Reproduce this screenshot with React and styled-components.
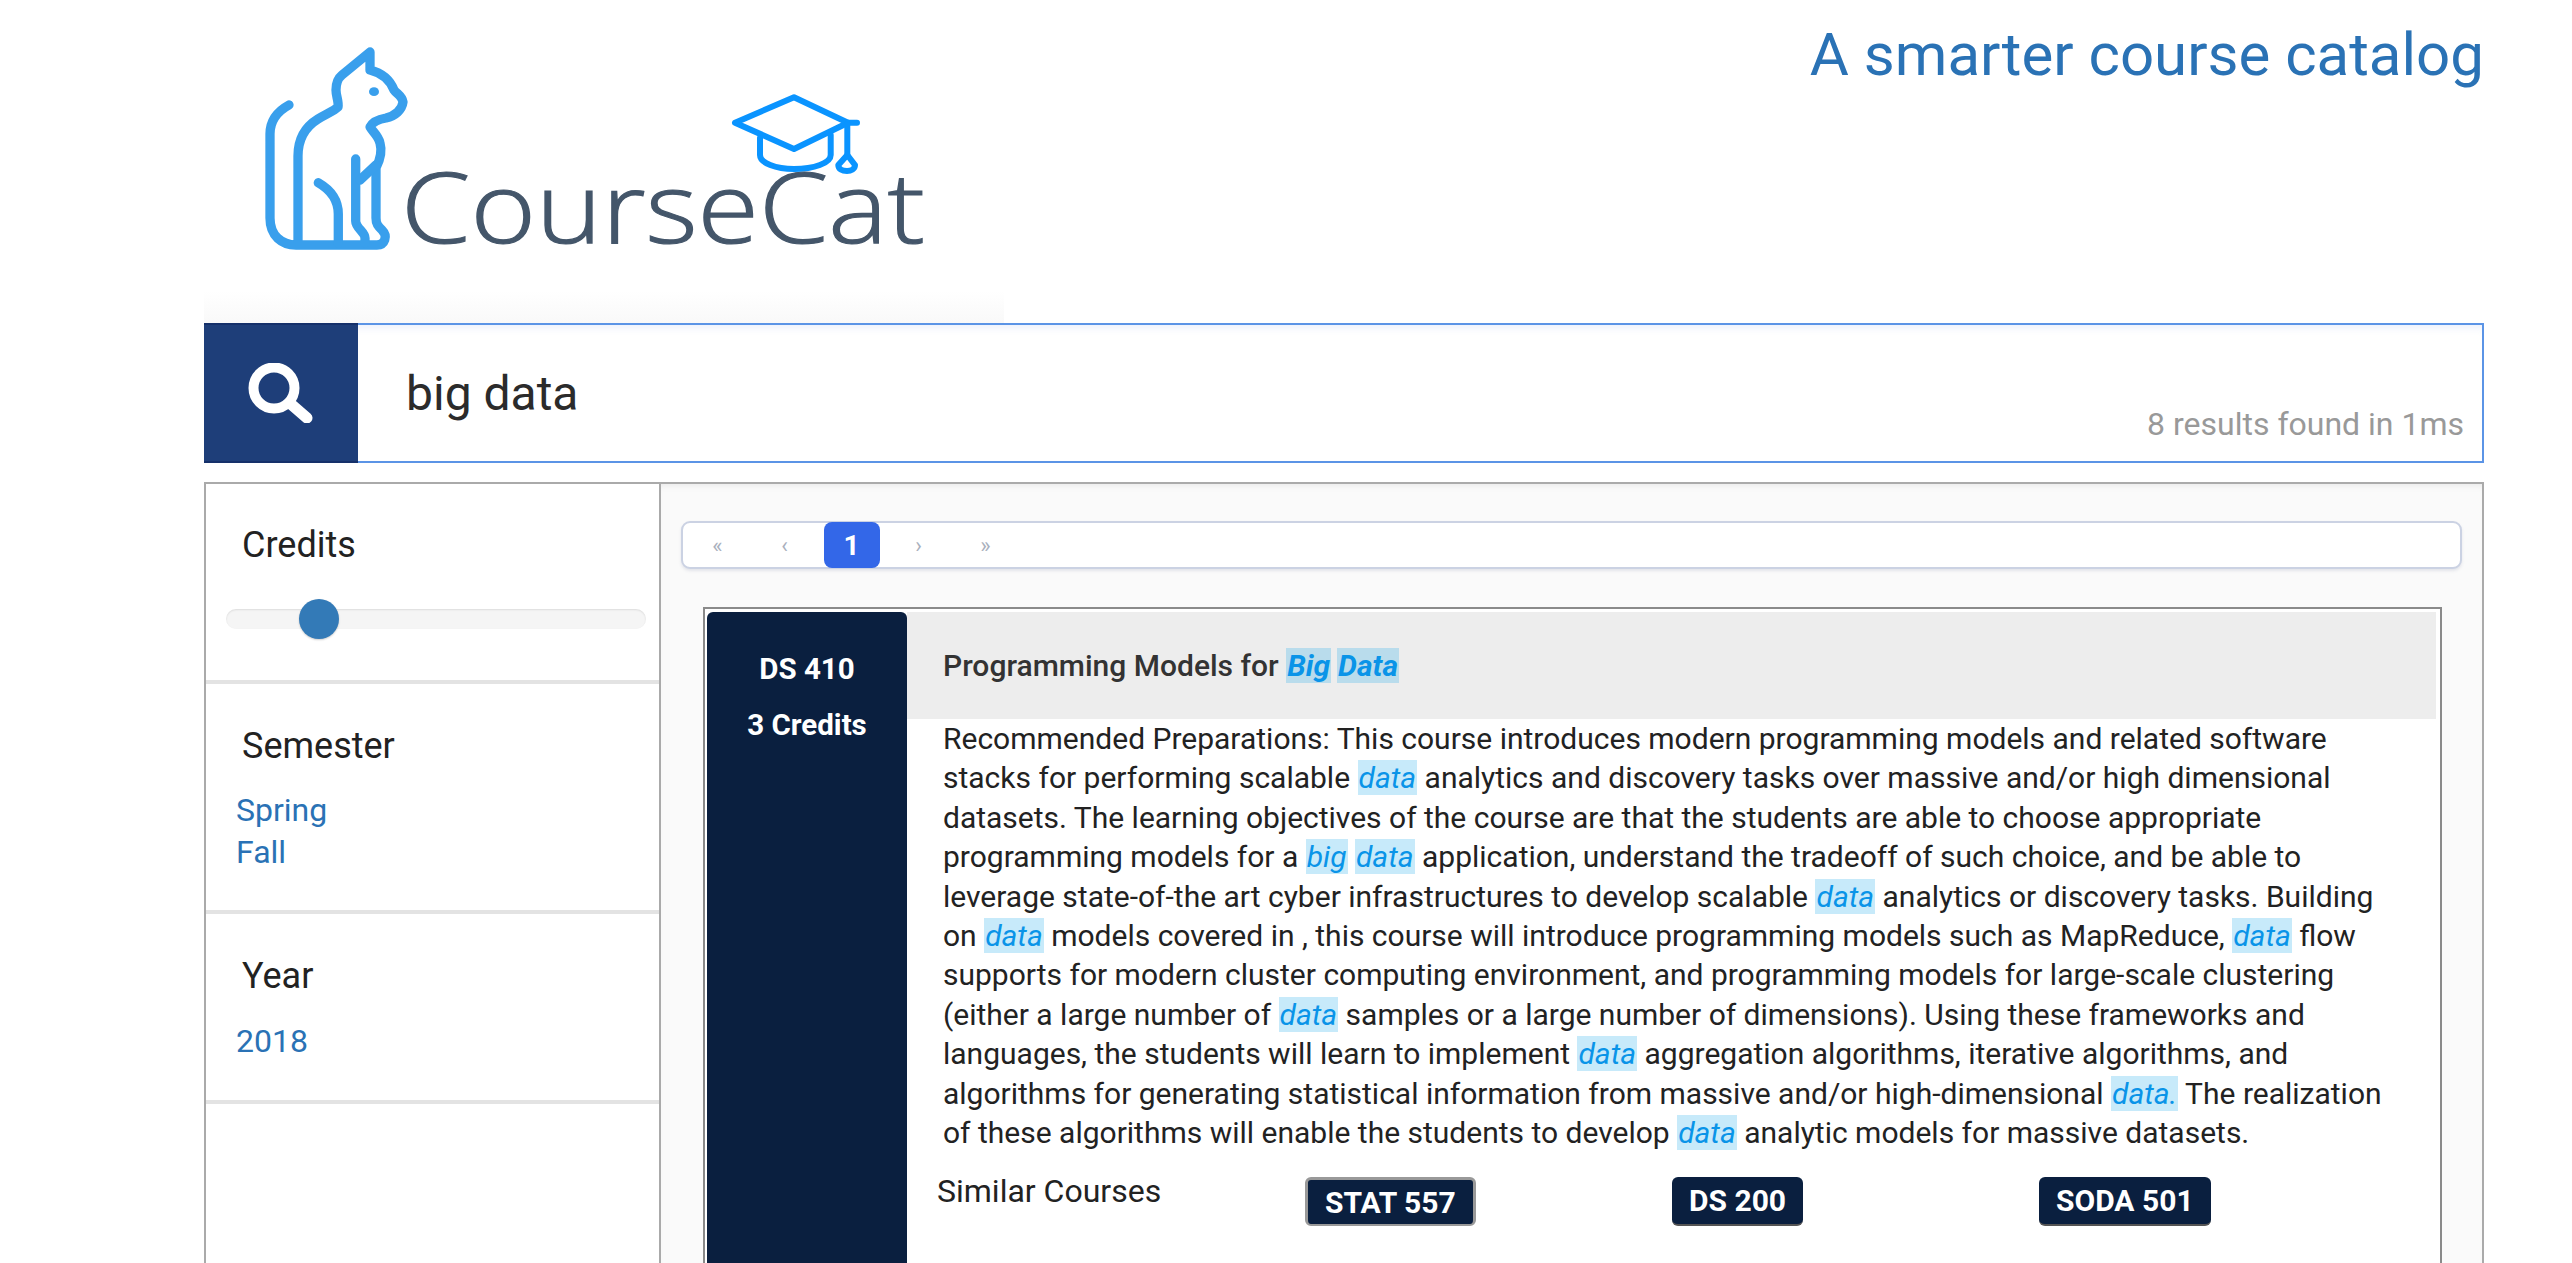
import React from 'react'
import styled, { createGlobalStyle } from 'styled-components'

const GlobalStyle = createGlobalStyle`
  html, body {
    margin: 0;
    padding: 0;
    background: #fff;
    overflow: hidden;
  }
  body {
    font-family: Roboto, "Liberation Sans", sans-serif;
    color: #222;
  }
`

const Page = styled.div`
  width: 2280px;
  height: 1263px;
  margin-left: 204px;
  overflow: hidden;
`
const Header = styled.header`
  height: 323px;
  display: flex;
  justify-content: space-between;
  align-items: flex-start;
`
const LogoWrap = styled.div`
  width: 800px;
  height: 323px;
  background: linear-gradient(to bottom, #fff 90%, #f9f9f9 100%);
  svg { display: block; }
`
const Tagline = styled.h1`
  margin: 20px 0 0;
  font-size: 60px;
  line-height: 70px;
  font-weight: 400;
  color: #2a72b5;
`
const SearchBar = styled.div`
  height: 140px;
  box-sizing: border-box;
  display: flex;
  border: 2px solid #5b94e6;
  border-left: none;
  box-shadow: inset 0 8px 8px -6px rgba(60, 110, 220, .12);
`
const SearchIconBox = styled.div`
  width: 154px;
  margin: -2px 0;
  background: #1e3e79;
  border-top: 2px solid #15306a;
  border-bottom: 2px solid #15306a;
  display: flex;
  align-items: center;
  justify-content: center;
`
const SearchField = styled.div`
  flex: 1;
  position: relative;
  padding: 42px 0 0 48px;
  font-size: 48px;
  line-height: 54px;
  color: #2b2b2b;
`
const ResultCount = styled.span`
  position: absolute;
  right: 18px;
  bottom: 19px;
  font-size: 32px;
  line-height: 36px;
  color: #999;
`
const Body = styled.div`
  margin-top: 19px;
  height: 800px;
  box-sizing: border-box;
  display: flex;
  border: 2px solid #aaa;
  border-bottom: none;
`
const Sidebar = styled.aside`
  width: 453px;
  flex: none;
  border-right: 2px solid #aaa;
  background: #fff;
`
const FilterGroup = styled.section`
  height: ${p => p.$h}px;
  box-sizing: border-box;
  padding: ${p => p.$pad}px 0 0 36px;
  border-bottom: 4px solid #e3e3e3;
`
const FilterTitle = styled.h3`
  margin: 0;
  font-size: 36px;
  line-height: 40px;
  font-weight: 400;
  color: #222;
`
const FilterLink = styled.a`
  display: block;
  margin-left: -6px;
  font-size: 32px;
  line-height: 42px;
  color: #2a72b5;
`
const FilterList = styled.div`
  margin-top: ${p => p.$mt}px;
`
const SliderTrack = styled.div`
  position: relative;
  margin: 44px 0 0 -16px;
  width: 420px;
  height: 20px;
  border-radius: 10px;
  background: #f5f5f5;
  box-shadow: inset 0 1px 2px rgba(0, 0, 0, .1);
`
const SliderKnob = styled.div`
  position: absolute;
  left: 73px;
  top: -10px;
  width: 40px;
  height: 40px;
  border-radius: 50%;
  background: #337ab7;
  box-shadow: 0 1px 2px rgba(0, 0, 0, .2);
`
const Results = styled.main`
  flex: 1;
  background: #fafafa;
  padding: 37px 20px 0;
  box-shadow: inset 0 6px 8px -6px rgba(0, 0, 0, .1);
`
const Pagination = styled.nav`
  height: 48px;
  box-sizing: border-box;
  display: flex;
  align-items: center;
  padding-left: 1px;
  background: #fff;
  border: 2px solid #cbd2e3;
  border-radius: 9px;
  box-shadow: 0 2px 3px rgba(100, 110, 150, .15);
`
const PageItem = styled.span`
  width: 56px;
  height: 46px;
  margin: 0 5.5px;
  display: flex;
  align-items: center;
  justify-content: center;
  font-size: ${p => p.$active ? 28 : 22}px;
  border-radius: 8px;
  color: ${p => p.$active ? '#fff' : '#a9b0bd'};
  background: ${p => p.$active ? '#3367e8' : 'transparent'};
  font-weight: ${p => p.$active ? 700 : 400};
`
const Card = styled.article`
  margin: 38px 20px 0 22px;
  height: 700px;
  display: flex;
  border: 2px solid #8a8a8a;
  padding: 3px 4px 0 2px;
  background: #fff;
`
const CourseTag = styled.div`
  width: 200px;
  flex: none;
  background: #0a1f3f;
  border-radius: 6px;
  color: #fff;
  font-weight: 700;
  font-size: 29.5px;
  line-height: 56px;
  text-align: center;
  padding-top: 29px;
`
const CardBody = styled.div`
  flex: 1;
`
const CardTitle = styled.h2`
  margin: 0;
  height: 107px;
  background: #ededed;
  display: flex;
  align-items: center;
  padding-left: 36px;
  font-size: 30px;
  font-weight: 500;
  color: #333;
`
const Description = styled.p`
  margin: 0;
  padding: 0 40px 0 36px;
  font-size: 30px;
  line-height: 39.4px;
  color: #222;
`
const Hit = styled.em`
  background: rgba(0, 160, 230, .22);
  color: #0a94e8;
  font-style: italic;
  padding: 0 1px;
`
const TitleHit = styled(Hit)`
  font-weight: 700;
  margin-right: 6px;
`
const SimilarRow = styled.div`
  display: flex;
  align-items: flex-start;
  margin: 17px 0 0 30px;
`
const SimilarLabel = styled.span`
  width: 368px;
  font-size: 32px;
  line-height: 44px;
`
const SimilarList = styled.div`
  display: flex;
  margin-top: 8px;
`
const SimilarCell = styled.div`
  width: 367px;
`
const CourseButton = styled.button`
  height: 49px;
  padding: 0 17px;
  background: #0a1f3f;
  color: #fff;
  font-family: inherit;
  font-size: 30px;
  font-weight: 700;
  border-radius: 6px;
  border: ${p => p.$focus ? '3px solid #999' : 'none'};
  border-bottom: 2px solid ${p => p.$focus ? '#999' : '#555'};
`

const LogoArt = () => (
  <svg width="800" height="323" viewBox="0 0 800 323">
    <g fill="none" stroke="#399fec" strokeWidth="9.3" strokeLinecap="round" strokeLinejoin="round">
      <path d="M85 105C74 111 66 120 66 134V218C66 236 78 245 92 245H173C181 245 184 236 178 230C174 226 172 224 172 218V168C177 158 178 150 176 143C174 135 168 131 166 127C169 121 176 119 182 118C191 116 198 110 199 102C198 96 193 94 190 90C186 80 178 73 166 70V52L138 75C133 79 132 84 132 90C132 96 135 102 134 107C130 111 122 114 114 119C101 127 94 140 94 156V243" />
      <path d="M151.7 159V221C151.7 228 161 232 161 238V243" />
      <path d="M172 165L156 180" />
      <path d="M114.3 182.7C127 190 134.3 200 134.3 214V243" />
    </g>
    <ellipse cx="170" cy="91.7" rx="5" ry="4.4" fill="#399fec" />
    <g fill="none" stroke="#0a94ff" strokeWidth="6" strokeLinecap="round" strokeLinejoin="round">
      <path d="M590 97.3L644 122.7L590 149L531 122.7Z" />
      <path d="M644 122.7H653" />
      <path d="M556 138V155C556 163 572 169 590 169C610 169 626.7 163 626.7 155V135" />
      <path d="M643.3 124V155" />
      <path d="M643.3 155L651 165C651 169 647 171 643 171C638 171 634.3 169 634.3 165Z" />
    </g>
    <text x="197" y="243" fontFamily="'Open Sans', sans-serif" fontWeight="300" fontSize="97" textLength="524" lengthAdjust="spacingAndGlyphs" fill="#44566a" stroke="#44566a" strokeWidth="1.2">CourseCat</text>
  </svg>
)

const SearchGlyph = () => (
  <svg width="66" height="60" viewBox="0 0 66 60">
    <circle cx="26" cy="25" r="20.5" fill="none" stroke="#fff" strokeWidth="10" />
    <path d="M44 42L59 55" stroke="#fff" strokeWidth="11" strokeLinecap="round" />
  </svg>
)

export default function App() {
  return (
    <Page>
      <GlobalStyle />
      <Header>
        <LogoWrap><LogoArt /></LogoWrap>
        <Tagline>A smarter course catalog</Tagline>
      </Header>
      <SearchBar>
        <SearchIconBox><SearchGlyph /></SearchIconBox>
        <SearchField>
          big data
          <ResultCount>8 results found in 1ms</ResultCount>
        </SearchField>
      </SearchBar>
      <Body>
        <Sidebar>
          <FilterGroup $h={200} $pad={41}>
            <FilterTitle>Credits</FilterTitle>
            <SliderTrack><SliderKnob /></SliderTrack>
          </FilterGroup>
          <FilterGroup $h={230} $pad={42}>
            <FilterTitle>Semester</FilterTitle>
            <FilterList $mt={23}>
              <FilterLink>Spring</FilterLink>
              <FilterLink>Fall</FilterLink>
            </FilterList>
          </FilterGroup>
          <FilterGroup $h={190} $pad={42}>
            <FilterTitle>Year</FilterTitle>
            <FilterList $mt={24}>
              <FilterLink>2018</FilterLink>
            </FilterList>
          </FilterGroup>
        </Sidebar>
        <Results>
          <Pagination>
            <PageItem>«</PageItem>
            <PageItem>‹</PageItem>
            <PageItem $active>1</PageItem>
            <PageItem>›</PageItem>
            <PageItem>»</PageItem>
          </Pagination>
          <Card>
            <CourseTag>DS 410<br />3 Credits</CourseTag>
            <CardBody>
              <CardTitle>Programming Models for&nbsp;<TitleHit>Big</TitleHit><TitleHit>Data</TitleHit></CardTitle>
              <Description>
                Recommended Preparations: This course introduces modern programming models and related software stacks for performing scalable <Hit>data</Hit> analytics and discovery tasks over massive and/or high dimensional datasets. The learning objectives of the course are that the students are able to choose appropriate programming models for a <Hit>big</Hit> <Hit>data</Hit> application, understand the tradeoff of such choice, and be able to leverage state-of-the art cyber infrastructures to develop scalable <Hit>data</Hit> analytics or discovery tasks. Building on <Hit>data</Hit> models covered in , this course will introduce programming models such as MapReduce, <Hit>data</Hit> flow supports for modern cluster computing environment, and programming models for large-scale clustering (either a large number of <Hit>data</Hit> samples or a large number of dimensions). Using these frameworks and languages, the students will learn to implement <Hit>data</Hit> aggregation algorithms, iterative algorithms, and algorithms for generating statistical information from massive and/or high-dimensional <Hit>data.</Hit> The realization of these algorithms will enable the students to develop <Hit>data</Hit> analytic models for massive datasets.
              </Description>
              <SimilarRow>
                <SimilarLabel>Similar Courses</SimilarLabel>
                <SimilarList>
                  <SimilarCell><CourseButton $focus>STAT 557</CourseButton></SimilarCell>
                  <SimilarCell><CourseButton>DS 200</CourseButton></SimilarCell>
                  <SimilarCell><CourseButton>SODA 501</CourseButton></SimilarCell>
                </SimilarList>
              </SimilarRow>
            </CardBody>
          </Card>
        </Results>
      </Body>
    </Page>
  )
}
